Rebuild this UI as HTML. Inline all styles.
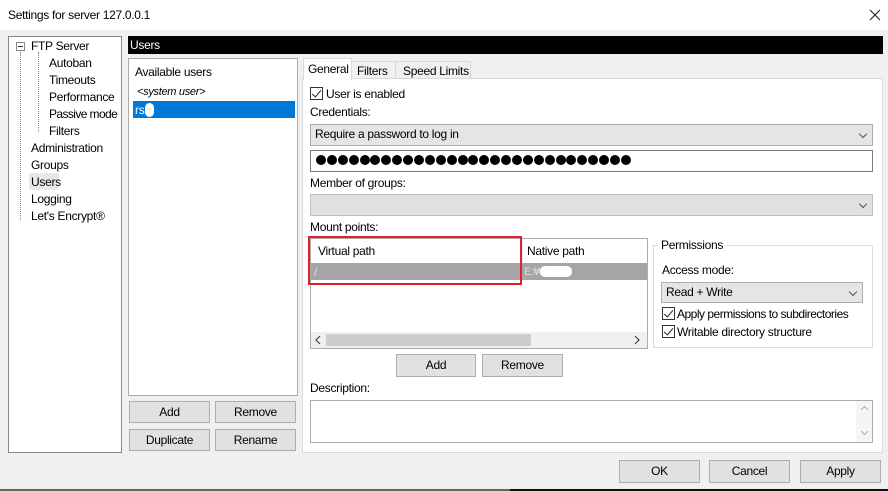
<!DOCTYPE html>
<html><head><meta charset="utf-8"><style>
*{box-sizing:border-box;margin:0;padding:0}
body{width:888px;height:491px;background:#f0f0f0;font-family:"Liberation Sans","Noto Sans CJK KR",sans-serif;font-size:12px;letter-spacing:-0.3px;color:#000;position:relative;overflow:hidden}
.a{position:absolute}
.t{position:absolute;white-space:nowrap;line-height:14px}
.box{position:absolute;background:#fff;border:1px solid #828790}
.btn{position:absolute;background:#e1e1e1;border:1px solid #adadad;text-align:center;line-height:20px}
.dd{position:absolute;background:#e5e5e5;border:1px solid #adadad;line-height:19px;padding-left:4px}
.dd:after{content:"";position:absolute;right:6px;top:6px;width:5px;height:5px;border-right:1px solid #555;border-bottom:1px solid #555;transform:rotate(45deg)}
.cb{position:absolute;width:13px;height:13px;border:1px solid #333;background:#fff}
.cb:after{content:"";position:absolute;left:3px;top:0px;width:4px;height:8px;border-right:1.5px solid #222;border-bottom:1.5px solid #222;transform:rotate(40deg)}
.dot{border-left:1px dotted #888}
.pw{position:absolute;left:316px;top:155px;height:11px;display:flex;gap:0.9px}
.pw i{display:block;width:10px;height:10px;border-radius:50%;background:#000}
</style></head><body>
<div class="a" style="left:0;top:0;width:888px;height:30px;background:#fff"></div>
<div class="t" style="left:8px;top:8px;font-size:12px">Settings for server 127.0.0.1</div>
<svg class="a" style="left:869px;top:9px" width="12" height="12"><path d="M1 1L11 11M11 1L1 11" stroke="#222" stroke-width="1.1"/></svg>

<div class="box" style="left:8px;top:36px;width:114px;height:417px"></div>
<div class="a" style="left:16px;top:42px;width:9px;height:9px;border:1px solid #888;background:#fff"></div>
<div class="a" style="left:18px;top:46px;width:5px;height:1px;background:#333"></div>
<div class="a dot" style="left:20px;top:52px;height:168px"></div>
<div class="a dot" style="left:38px;top:52px;height:80px"></div>
<div class="t" style="left:31px;top:39px">FTP Server</div>
<div class="t" style="left:49px;top:56px">Autoban</div>
<div class="t" style="left:49px;top:73px">Timeouts</div>
<div class="t" style="left:49px;top:90px">Performance</div>
<div class="t" style="left:49px;top:107px;letter-spacing:-0.6px">Passive mode</div>
<div class="t" style="left:49px;top:124px">Filters</div>
<div class="t" style="left:31px;top:141px">Administration</div>
<div class="t" style="left:31px;top:158px">Groups</div>
<div class="a" style="left:29px;top:173px;width:30px;height:17px;background:#e8e8e8"></div>
<div class="t" style="left:31px;top:175px">Users</div>
<div class="t" style="left:31px;top:192px">Logging</div>
<div class="t" style="left:31px;top:209px">Let's Encrypt®</div>

<div class="a" style="left:128px;top:36px;width:755px;height:18px;background:#000"></div>
<div class="t" style="left:130px;top:38px;color:#fff">Users</div>

<div class="box" style="left:128px;top:58px;width:170px;height:338px;border-color:#aaa"></div>
<div class="t" style="left:135px;top:65px">Available users</div>
<div class="t" style="left:137px;top:85px;font-style:italic;font-size:11px">&lt;system user&gt;</div>
<div class="a" style="left:133px;top:101px;width:162px;height:17px;background:#0078d7"></div>
<div class="t" style="left:135px;top:103px;color:#fff">rs</div>
<div class="a" style="left:145px;top:103px;width:9px;height:14px;background:#fff;border-radius:5px"></div>

<div class="btn" style="left:129px;top:401px;width:81px;height:22px">Add</div>
<div class="btn" style="left:215px;top:401px;width:81px;height:22px">Remove</div>
<div class="btn" style="left:129px;top:429px;width:81px;height:22px">Duplicate</div>
<div class="btn" style="left:215px;top:429px;width:81px;height:22px">Rename</div>

<div class="a" style="left:302px;top:78px;width:581px;height:375px;background:#fff;border:1px solid #d9d9d9"></div>
<div class="a" style="left:351px;top:61px;width:45px;height:18px;background:#f0f0f0;border:1px solid #d9d9d9"></div>
<div class="a" style="left:395px;top:61px;width:76px;height:18px;background:#f0f0f0;border:1px solid #d9d9d9"></div>
<div class="a" style="left:303px;top:58px;width:49px;height:22px;background:#fff;border:1px solid #d9d9d9;border-bottom:none"></div>
<div class="t" style="left:308px;top:62px">General</div>
<div class="t" style="left:357px;top:64px">Filters</div>
<div class="t" style="left:403px;top:64px">Speed Limits</div>

<div class="cb" style="left:310px;top:87px"></div>
<div class="t" style="left:326px;top:87px">User is enabled</div>
<div class="t" style="left:310px;top:105px">Credentials:</div>
<div class="dd" style="left:310px;top:124px;width:563px;height:22px">Require a password to log in</div>
<div class="a" style="left:310px;top:150px;width:563px;height:22px;background:#fff;border:1px solid #7a7a7a"></div>
<div class="pw"><i></i><i></i><i></i><i></i><i></i><i></i><i></i><i></i><i></i><i></i><i></i><i></i><i></i><i></i><i></i><i></i><i></i><i></i><i></i><i></i><i></i><i></i><i></i><i></i><i></i><i></i><i></i><i></i><i></i></div>
<div class="t" style="left:310px;top:176px">Member of groups:</div>
<div class="dd" style="left:310px;top:194px;width:563px;height:22px;background:#e1e1e1;border-color:#bfbfbf"></div>
<div class="t" style="left:310px;top:220px">Mount points:</div>

<div class="a" style="left:310px;top:238px;width:338px;height:111px;background:#fff;border:1px solid #adadad"></div>
<div class="a" style="left:522px;top:239px;width:1px;height:24px;background:#e5e5e5"></div>
<div class="t" style="left:318px;top:244px">Virtual path</div>
<div class="t" style="left:527px;top:244px">Native path</div>
<div class="a" style="left:311px;top:263px;width:336px;height:17px;background:#a5a5a5"></div>
<div class="t" style="left:314px;top:265px;color:#ddd">/</div>
<div class="t" style="left:524px;top:265px;color:#ddd;font-size:11px">E:₩</div>
<div class="a" style="left:540px;top:266px;width:32px;height:11px;background:#fff;border-radius:5px"></div>
<div class="a" style="left:311px;top:332px;width:336px;height:16px;background:#f0f0f0"></div>
<div class="a" style="left:326px;top:334px;width:205px;height:12px;background:#cdcdcd"></div>
<svg class="a" style="left:314px;top:335px" width="8" height="10"><path d="M6 1L2 5L6 9" fill="none" stroke="#444" stroke-width="1.2"/></svg>
<svg class="a" style="left:633px;top:335px" width="8" height="10"><path d="M2 1L6 5L2 9" fill="none" stroke="#444" stroke-width="1.2"/></svg>
<div class="a" style="left:308px;top:236px;width:214px;height:49px;border:2px solid #e0202a"></div>

<div class="a" style="left:653px;top:245px;width:220px;height:103px;border:1px solid #dcdcdc"></div>
<div class="t" style="left:658px;top:238px;background:#fff;padding:0 3px">Permissions</div>
<div class="t" style="left:662px;top:263px">Access mode:</div>
<div class="dd" style="left:661px;top:282px;width:202px;height:21px">Read + Write</div>
<div class="cb" style="left:662px;top:307px"></div>
<div class="t" style="left:677px;top:307px;letter-spacing:-0.5px">Apply permissions to subdirectories</div>
<div class="cb" style="left:662px;top:325px"></div>
<div class="t" style="left:677px;top:325px">Writable directory structure</div>

<div class="btn" style="left:396px;top:354px;width:80px;height:23px">Add</div>
<div class="btn" style="left:482px;top:354px;width:81px;height:23px">Remove</div>
<div class="t" style="left:310px;top:381px">Description:</div>
<div class="a" style="left:310px;top:400px;width:563px;height:43px;background:#fff;border:1px solid #adadad"></div>
<div class="a" style="left:856px;top:401px;width:16px;height:41px;background:#f5f5f5"></div>
<svg class="a" style="left:860px;top:405px" width="9" height="6"><path d="M1 5L4.5 1.5L8 5" fill="none" stroke="#aaa"/></svg>
<svg class="a" style="left:860px;top:430px" width="9" height="6"><path d="M1 1L4.5 4.5L8 1" fill="none" stroke="#aaa"/></svg>

<div class="btn" style="left:619px;top:460px;width:81px;height:23px">OK</div>
<div class="btn" style="left:709px;top:460px;width:81px;height:23px">Cancel</div>
<div class="btn" style="left:800px;top:460px;width:81px;height:23px">Apply</div>
<div class="a" style="left:0;top:489px;width:510px;height:2px;background:#666"></div>
<div class="a" style="left:510px;top:489px;width:378px;height:2px;background:#111"></div>
</body></html>
